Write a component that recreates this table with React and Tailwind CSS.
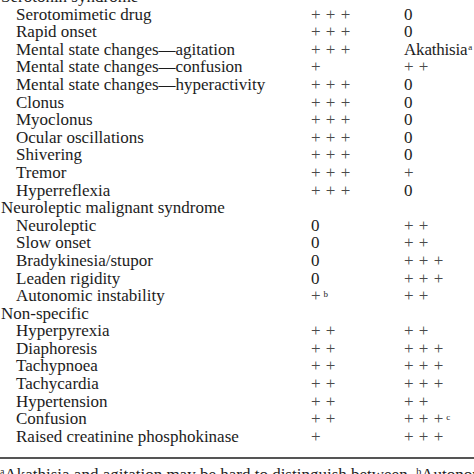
import React from "react";

const rows = [
  { h: true, label: "Serotonin syndrome" },
  { label: "Serotomimetic drug", a: "+ + +", b: "0" },
  { label: "Rapid onset", a: "+ + +", b: "0" },
  { label: "Mental state changes—agitation", a: "+ + +", b: "Akathisia", bs: "a" },
  { label: "Mental state changes—confusion", a: "+", b: "+ +" },
  { label: "Mental state changes—hyperactivity", a: "+ + +", b: "0" },
  { label: "Clonus", a: "+ + +", b: "0" },
  { label: "Myoclonus", a: "+ + +", b: "0" },
  { label: "Ocular oscillations", a: "+ + +", b: "0" },
  { label: "Shivering", a: "+ + +", b: "0" },
  { label: "Tremor", a: "+ + +", b: "+" },
  { label: "Hyperreflexia", a: "+ + +", b: "0" },
  { h: true, label: "Neuroleptic malignant syndrome" },
  { label: "Neuroleptic", a: "0", b: "+ +" },
  { label: "Slow onset", a: "0", b: "+ +" },
  { label: "Bradykinesia/stupor", a: "0", b: "+ + +" },
  { label: "Leaden rigidity", a: "0", b: "+ + +" },
  { label: "Autonomic instability", a: "+", as: "b", b: "+ +" },
  { h: true, label: "Non-specific" },
  { label: "Hyperpyrexia", a: "+ +", b: "+ +" },
  { label: "Diaphoresis", a: "+ +", b: "+ + +" },
  { label: "Tachypnoea", a: "+ +", b: "+ + +" },
  { label: "Tachycardia", a: "+ +", b: "+ + +" },
  { label: "Hypertension", a: "+ +", b: "+ +" },
  { label: "Confusion", a: "+ +", b: "+ + +", bs: "c" },
  { label: "Raised creatinine phosphokinase", a: "+", b: "+ + +" },
];

function Cell({ v, s }) {
  if (!v) return <div />;
  const isPlus = v.startsWith("+");
  return (
    <div className="whitespace-nowrap">
      {isPlus ? (
        <span className="text-[#4a4a4a] [word-spacing:1px]">{v}</span>
      ) : (
        <span className={v === "Akathisia" ? "tracking-[-0.2px]" : ""}>{v}</span>
      )}
      {s && <sup className={`text-[9px] ${isPlus ? "ml-[3px]" : "ml-[1px]"}`}>{s}</sup>}
    </div>
  );
}

export default function App() {
  return (
    <div
      className="w-[474px] h-[474px] overflow-hidden bg-white text-[#1c1c1c]"
      style={{ fontFamily: '"Liberation Serif", "Times New Roman", serif' }}
    >
      <div className="mt-[-12px] text-[17px] leading-[17.6px]">
        {rows.map((r, i) =>
          r.h ? (
            <div key={i} className="h-[17.6px] whitespace-nowrap pl-[1px]">
              {r.label}
            </div>
          ) : (
            <div key={i} className="grid grid-cols-[311px_93px_1fr] h-[17.6px]">
              <div className="pl-[16px] whitespace-nowrap">{r.label}</div>
              <Cell v={r.a} s={r.as} />
              <Cell v={r.b} s={r.bs} />
            </div>
          )
        )}
        <div className="mt-[12px] h-[2px] bg-[#555]" />
        <div className="mt-[7px] whitespace-nowrap">
          <sup className="text-[10px]">a</sup>Akathisia and agitation may be hard to distinguish between.{" "}
          <sup className="text-[10px]">b</sup>Autonomic instability
        </div>
      </div>
    </div>
  );
}
